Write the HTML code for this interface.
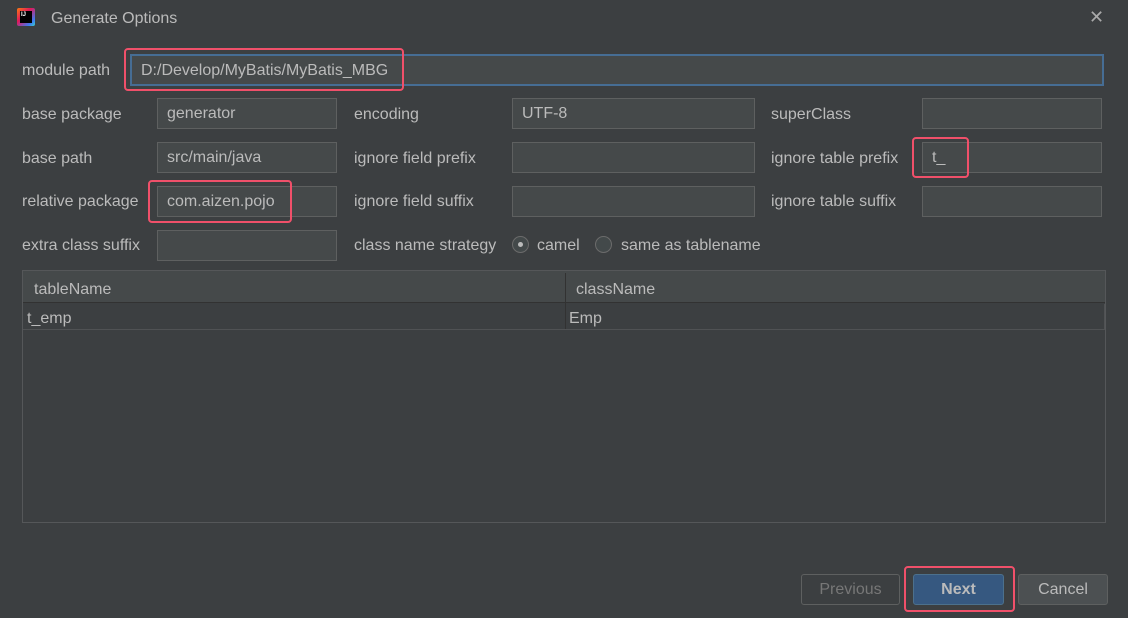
<!DOCTYPE html>
<html><head><style>
body{margin:0;width:1128px;height:618px;background:#3c3f41;font-family:"Liberation Sans",sans-serif;font-size:16px;letter-spacing:0px;color:#bbbbbb;position:relative;overflow:hidden}
.a{position:absolute}
.l{position:absolute;line-height:20px;margin-top:1px}
.in{position:absolute;background:#45494a;border:1px solid #5e6060;box-sizing:border-box;height:31px;line-height:30px;padding-left:9px;color:#bbbbbb}
.red{position:absolute;border:2px solid #f0506a;border-radius:4px;box-sizing:border-box}
.btn{position:absolute;box-sizing:border-box;height:31px;border:1px solid #5e6060;border-radius:3px;text-align:center;line-height:29px;background:#4c5052}
</style></head><body>
<div class="a" style="left:17px;top:8px;width:18px;height:18px;background:linear-gradient(135deg,#f97a12,#e2185a 40%,#3c78f0 80%,#3cd2c8);border-radius:2px"></div>
<div class="a" style="left:20px;top:11px;width:12px;height:12px;background:#000;color:#fff;font-size:6px;font-weight:bold;line-height:8px;padding-left:1px;box-sizing:border-box">IJ</div>
<div class="l" style="left:51px;top:8px">Generate Options</div>
<div class="l" style="left:1089px;top:7px;font-size:18px;color:#aaa;font-family:'DejaVu Sans',sans-serif">✕</div>

<div class="l" style="left:22px;top:60px">module path</div>
<div class="in" style="left:130px;top:54px;width:974px;height:32px;border:2px solid #466d94;line-height:29px">D:/Develop/MyBatis/MyBatis_MBG</div>

<div class="l" style="left:22px;top:104px">base package</div>
<div class="in" style="left:157px;top:98px;width:180px">generator</div>
<div class="l" style="left:354px;top:104px">encoding</div>
<div class="in" style="left:512px;top:98px;width:243px">UTF-8</div>
<div class="l" style="left:771px;top:104px">superClass</div>
<div class="in" style="left:922px;top:98px;width:180px"></div>

<div class="l" style="left:22px;top:148px">base path</div>
<div class="in" style="left:157px;top:142px;width:180px">src/main/java</div>
<div class="l" style="left:354px;top:148px">ignore field prefix</div>
<div class="in" style="left:512px;top:142px;width:243px"></div>
<div class="l" style="left:771px;top:148px">ignore table prefix</div>
<div class="in" style="left:922px;top:142px;width:180px">t_</div>

<div class="l" style="left:22px;top:191px">relative package</div>
<div class="in" style="left:157px;top:186px;width:180px">com.aizen.pojo</div>
<div class="l" style="left:354px;top:191px">ignore field suffix</div>
<div class="in" style="left:512px;top:186px;width:243px"></div>
<div class="l" style="left:771px;top:191px">ignore table suffix</div>
<div class="in" style="left:922px;top:186px;width:180px"></div>

<div class="l" style="left:22px;top:235px">extra class suffix</div>
<div class="in" style="left:157px;top:230px;width:180px"></div>
<div class="l" style="left:354px;top:235px">class name strategy</div>
<div class="a" style="left:512px;top:236px;width:17px;height:17px;border:1px solid #6b6b6b;border-radius:50%;box-sizing:border-box;background:#43494a"></div>
<div class="a" style="left:518px;top:242px;width:5px;height:5px;border-radius:50%;background:#bbb"></div>
<div class="l" style="left:537px;top:235px">camel</div>
<div class="a" style="left:595px;top:236px;width:17px;height:17px;border:1px solid #6b6b6b;border-radius:50%;box-sizing:border-box;background:#43494a"></div>
<div class="l" style="left:621px;top:235px">same as tablename</div>

<div class="a" style="left:22px;top:270px;width:1084px;height:253px;border:1px solid #555759;box-sizing:border-box;background:#3c3f41"></div>
<div class="a" style="left:23px;top:271px;width:1082px;height:32px;background:#45494a;border-bottom:1px solid #323232;box-sizing:border-box"></div>
<div class="a" style="left:565px;top:273px;width:1px;height:56px;background:#323232"></div>
<div class="a" style="left:23px;top:329px;width:1082px;height:1px;background:#505254"></div>
<div class="a" style="left:1104px;top:304px;width:1px;height:25px;background:#505254"></div>
<div class="l" style="left:34px;top:279px">tableName</div>
<div class="l" style="left:576px;top:279px">className</div>
<div class="l" style="left:27px;top:308px">t_emp</div>
<div class="l" style="left:569px;top:308px">Emp</div>

<div class="btn" style="left:801px;top:574px;width:99px;background:#3c3f41;color:#777">Previous</div>
<div class="btn" style="left:913px;top:574px;width:91px;background:#365880;border-color:#4c708c;font-weight:bold">Next</div>
<div class="btn" style="left:1018px;top:574px;width:90px">Cancel</div>

<div class="red" style="left:124px;top:48px;width:280px;height:43px"></div>
<div class="red" style="left:912px;top:137px;width:57px;height:41px"></div>
<div class="red" style="left:148px;top:180px;width:144px;height:43px"></div>
<div class="red" style="left:904px;top:566px;width:111px;height:46px"></div>
</body></html>
